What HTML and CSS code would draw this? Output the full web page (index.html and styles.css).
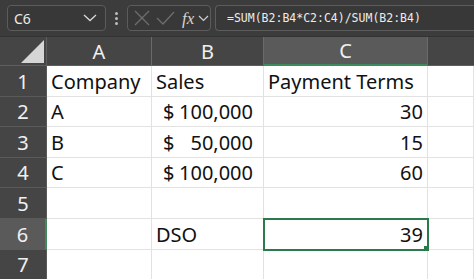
FILE: index.html
```html
<!DOCTYPE html>
<html lang="en">
<head>
    <meta charset="UTF-8">
    <title>DSO</title>
    <link rel="stylesheet" href="styles.css">
</head>
<body>

<div class="toolbar">
    <div class="name-box">
        <span>C6</span>
        <svg width="14" height="8" viewBox="0 0 14 8"><path d="M1 1 L7 6.5 L13 1" fill="none" stroke="#d8d8d8" stroke-width="1.3"/></svg>
    </div>
    <div class="dots"><i></i><i></i><i></i></div>
    <div class="fx-box">
        <svg width="18" height="18" viewBox="0 0 18 18"><path d="M2 2 L16 16 M16 2 L2 16" stroke="#6e6e6e" stroke-width="1.3"/></svg>
        <svg width="20" height="18" viewBox="0 0 20 18"><path d="M2 9 L8 15 L19 3" fill="none" stroke="#6e6e6e" stroke-width="1.3"/></svg>
        <span class="fx">fx</span>
        <svg width="11" height="7" viewBox="0 0 11 7"><path d="M1 1 L5.5 5.5 L10 1" fill="none" stroke="#cfcfcf" stroke-width="1.2"/></svg>
    </div>
    <div class="formula">=SUM(B2:B4*C2:C4)/SUM(B2:B4)</div>
</div>

<div class="sheet">
    <div class="corner"><div class="tri"></div></div>
    <div class="col-head">A</div>
    <div class="col-head">B</div>
    <div class="col-head active">C</div>
    <div class="col-head last"></div>

    <div class="row-head">1</div>
    <div class="cell">Company</div>
    <div class="cell">Sales</div>
    <div class="cell">Payment Terms</div>
    <div class="cell"></div>

    <div class="row-head">2</div>
    <div class="cell">A</div>
    <div class="cell money"><span>$</span><span>100,000</span></div>
    <div class="cell num">30</div>
    <div class="cell"></div>

    <div class="row-head">3</div>
    <div class="cell">B</div>
    <div class="cell money"><span>$</span><span>50,000</span></div>
    <div class="cell num">15</div>
    <div class="cell"></div>

    <div class="row-head">4</div>
    <div class="cell">C</div>
    <div class="cell money"><span>$</span><span>100,000</span></div>
    <div class="cell num">60</div>
    <div class="cell"></div>

    <div class="row-head">5</div>
    <div class="cell"></div>
    <div class="cell"></div>
    <div class="cell"></div>
    <div class="cell"></div>

    <div class="row-head active">6</div>
    <div class="cell"></div>
    <div class="cell">DSO</div>
    <div class="cell num selected">39</div>
    <div class="cell"></div>

    <div class="row-head">7</div>
    <div class="cell"></div>
    <div class="cell"></div>
    <div class="cell"></div>
    <div class="cell"></div>
</div>

</body>
</html>
```

FILE: styles.css
```css
body {
    margin: 0;
    width: 474px;
    height: 279px;
    overflow: hidden;
    background-color: #ffffff;
    font-family: "Noto Sans", sans-serif;
}

/* formula bar */
.toolbar {
    height: 37px;
    background-color: #3c3c3c;
    display: flex;
    align-items: center;
    padding-left: 7px;
    box-sizing: border-box;
    border-bottom: 1px solid #333;
}

.name-box {
    width: 99px;
    height: 26px;
    box-sizing: border-box;
    border: 1px solid #5c5c5c;
    border-radius: 4px;
    background-color: #383838;
    display: flex;
    align-items: center;
    justify-content: space-between;
    padding: 0 8px 0 6px;
    color: #ececec;
    font-size: 14px;
}

.dots {
    width: 21px;
    display: flex;
    flex-direction: column;
    align-items: center;
    gap: 2px;
}

.dots i {
    width: 3px;
    height: 3px;
    background-color: #bdbdbd;
    border-radius: 50%;
}

.fx-box {
    width: 84px;
    height: 26px;
    box-sizing: border-box;
    border: 1px solid #5c5c5c;
    border-radius: 4px;
    background-color: #383838;
    display: flex;
    align-items: center;
    gap: 4px;
    padding-left: 5px;
}

.fx {
    font-family: "Liberation Serif", serif;
    font-style: italic;
    font-size: 17px;
    color: #d4d4d4;
    margin-left: 3px;
    line-height: 1;
}

.formula {
    flex: 1;
    height: 26px;
    margin-left: 4px;
    box-sizing: border-box;
    border: 1px solid #5c5c5c;
    border-right: none;
    border-radius: 4px 0 0 4px;
    background-color: #383838;
    color: #ececec;
    font-family: "DejaVu Sans Mono", monospace;
    font-size: 11.5px;
    display: flex;
    align-items: center;
    padding-left: 11px;
}

/* grid */
.sheet {
    display: grid;
    grid-template-columns: 47px 105px 112px 164px 1fr;
    grid-template-rows: 29px 31px 30px 31px 30px 31px 31px 30px;
}

.corner {
    background-color: #454545;
    border-right: 1px solid #5e5e5e;
    border-bottom: 1px solid #5e5e5e;
    position: relative;
}

.tri {
    position: absolute;
    right: 2px;
    bottom: 2px;
    width: 0;
    height: 0;
    border-left: 23px solid transparent;
    border-bottom: 23px solid #d6d6d6;
}

.col-head {
    background-color: #454545;
    color: #f0f0f0;
    font-size: 20px;
    display: flex;
    align-items: center;
    justify-content: center;
    border-right: 1px solid #6a6a6a;
    border-bottom: 1px solid #5e5e5e;
}

.col-head.active {
    background-color: #5a5a5a;
    border-bottom: 2px solid #3f8a5c;
}

.col-head.last {
    border-right: none;
}

.row-head {
    background-color: #454545;
    color: #f0f0f0;
    font-size: 20px;
    display: flex;
    align-items: center;
    justify-content: center;
    border-bottom: 1px solid #5a5a5a;
    border-right: 1px solid #5a5a5a;
}

.row-head.active {
    background-color: #5a5a5a;
    border-right: 2px solid #3f8a5c;
}

.cell {
    color: #111;
    font-size: 20px;
    display: flex;
    align-items: center;
    padding: 0 4px;
    border-right: 1px solid #e2e2e2;
    border-bottom: 1px solid #e2e2e2;
    white-space: nowrap;
    overflow: hidden;
}

.num {
    justify-content: flex-end;
}

.money {
    justify-content: space-between;
    padding: 0 10px 0 11px;
}

.selected {
    position: relative;
    outline: 2px solid #2b7a4b;
    outline-offset: -1px;
}

.selected::after {
    content: "";
    position: absolute;
    right: -3px;
    bottom: -3px;
    width: 5px;
    height: 5px;
    background-color: #2b7a4b;
    border: 1px solid #fff;
}
```
